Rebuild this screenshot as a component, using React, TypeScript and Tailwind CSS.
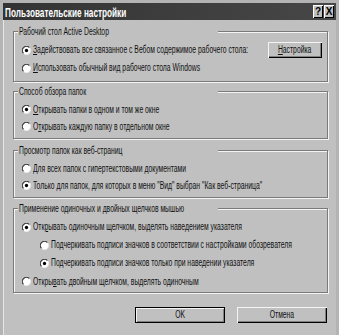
import React from "react";

const T = ({ children, c = "" }: { children: React.ReactNode; c?: string }) => (
  <span className={"inline-block whitespace-nowrap origin-left scale-x-[0.68] " + c}>{children}</span>
);

const Radio = ({ on = false }: { on?: boolean }) => (
  <svg width="9" height="9" viewBox="0 0 12 12" className="shrink-0">
    <circle cx="6" cy="6" r="5.5" fill="#ffffff" />
    <path d="M2.1 9.9 A5.5 5.5 0 0 1 9.9 2.1" fill="none" stroke="#3a3a3a" strokeWidth="1.6" />
    <path d="M9.9 2.1 A5.5 5.5 0 0 1 2.1 9.9" fill="none" stroke="#e8e8e8" strokeWidth="1" />
    {on && <circle cx="6" cy="6" r="2.2" fill="#000" />}
  </svg>
);

const Row = ({ on, children, indent = false, h = "h-[18px]", cls = "" }: { on?: boolean; children: React.ReactNode; indent?: boolean; h?: string; cls?: string }) => (
  <div className={"flex items-center " + h + (indent ? " pl-[18px]" : "") + " " + cls}>
    <Radio on={on} />
    <div className="ml-[2px] min-w-0 text-[10px] leading-[12px] text-[#111]">
      <T>{children}</T>
    </div>
  </div>
);

const Group = ({ label, children, cls }: { label: string; children: React.ReactNode; cls: string }) => (
  <div className={"relative border border-[#7a7a7a] shadow-[inset_1px_1px_0_#f4f4f4,1px_1px_0_#f4f4f4] pl-[8px] pt-[9px] " + cls}>
    <div className="absolute -top-[6px] left-[4px] bg-[#c0c0c0] pl-[1px] text-[10px] leading-[12px] text-[#111] w-[200px]">
      <T>{label}</T>
    </div>
    {children}
  </div>
);

const Btn = ({ children, cls = "", def = false }: { children: React.ReactNode; cls?: string; def?: boolean }) => (
  <div
    className={
      "flex shrink-0 items-center justify-center bg-[#c0c0c0] text-[10px] leading-[12px] text-[#111] " +
      (def
        ? "border border-[#000] shadow-[inset_1px_1px_0_#f4f4f4,inset_-1px_-1px_0_#808080] "
        : "shadow-[inset_1px_1px_0_#f4f4f4,inset_-1px_-1px_0_#000,inset_-2px_-2px_0_#808080] ") +
      cls
    }
  >
    <span className="inline-block whitespace-nowrap scale-x-[0.68]">{children}</span>
  </div>
);

export default function App() {
  return (
    <div className="w-[339px] h-[335px] bg-[#c0c0c0] overflow-hidden font-[family-name:'Liberation_Sans',Arial,sans-serif]">
      <div className="h-full flex flex-col border-l-[3px] border-t-[3px] border-r-[3px] border-[#b4b4b4] shadow-[inset_1px_1px_0_#e6e6e6]">
        <div className="h-[17px] flex items-center justify-between bg-[linear-gradient(90deg,#333333,#474747)] pl-[2px] pr-[2px] overflow-hidden">
          <div className="min-w-0 flex-1">
            <span className="inline-block whitespace-nowrap origin-left scale-x-[0.685] text-white font-bold text-[12px] leading-[14px]">
              Пользовательские настройки
            </span>
          </div>
          <div className="flex shrink-0 gap-[1px]">
            <div className="w-[10px] h-[13px] bg-[#c0c0c0] shadow-[inset_1px_1px_0_#fff,inset_-1px_-1px_0_#000] flex items-center justify-center text-[10px] font-bold leading-none text-black">?</div>
            <div className="w-[10px] h-[13px] bg-[#c0c0c0] shadow-[inset_1px_1px_0_#fff,inset_-1px_-1px_0_#000] flex items-center justify-center text-[10px] font-bold leading-none text-black">X</div>
          </div>
        </div>

        <div className="flex flex-col pl-[10px] pr-[8px]">
          <Group label="Рабочий стол Active Desktop" cls="mt-[11px] h-[51px]">
            <div className="flex items-center h-[18px] pr-[5px]">
              <Row on cls="flex-1 min-w-0">
                <u>З</u>адействовать все связанное с Вебом содержимое рабочего стола:
              </Row>
              <Btn cls="w-[54px] h-[16px]">
                <u>Н</u>астройка
              </Btn>
            </div>
            <Row>
              <u>И</u>спользовать обычный вид рабочего стола Windows
            </Row>
          </Group>

          <Group label="Способ обзора папок" cls="mt-[9px] h-[48px]">
            <Row on h="h-[17px]">
              <u>О</u>ткрывать папки в одном и том же окне
            </Row>
            <Row h="h-[17px]">
              О<u>т</u>крывать каждую папку в отдельном окне
            </Row>
          </Group>

          <Group label="Просмотр папок как веб-страниц" cls="mt-[11px] h-[48px]">
            <Row h="h-[17px]">
              <u>Д</u>ля всех папок с гипертекстовыми документами
            </Row>
            <Row on h="h-[17px]">
              Только для папок, для которых в меню "Вид" выбран "Как веб-страница"
            </Row>
          </Group>

          <Group label="Применение одиночных и двойных щелчков мышью" cls="mt-[10px] h-[85px]">
            <Row on>
              Отк<u>р</u>ывать одиночным щелчком, выделять наведением указателя
            </Row>
            <Row indent>Подчеркивать подписи значков в соответствии с настройками обозревателя</Row>
            <Row indent on>
              Подчеркивать подписи значков только при наведении указателя
            </Row>
            <Row h="h-[19px]">
              Откры<u>в</u>ать двойным щелчком, выделять одиночным
            </Row>
          </Group>

          <div className="flex justify-end gap-[12px] mt-[14px] pr-[1px]">
            <Btn def cls="w-[90px] h-[16px]">OK</Btn>
            <Btn cls="w-[90px] h-[16px]">Отмена</Btn>
          </div>
        </div>
      </div>
    </div>
  );
}
